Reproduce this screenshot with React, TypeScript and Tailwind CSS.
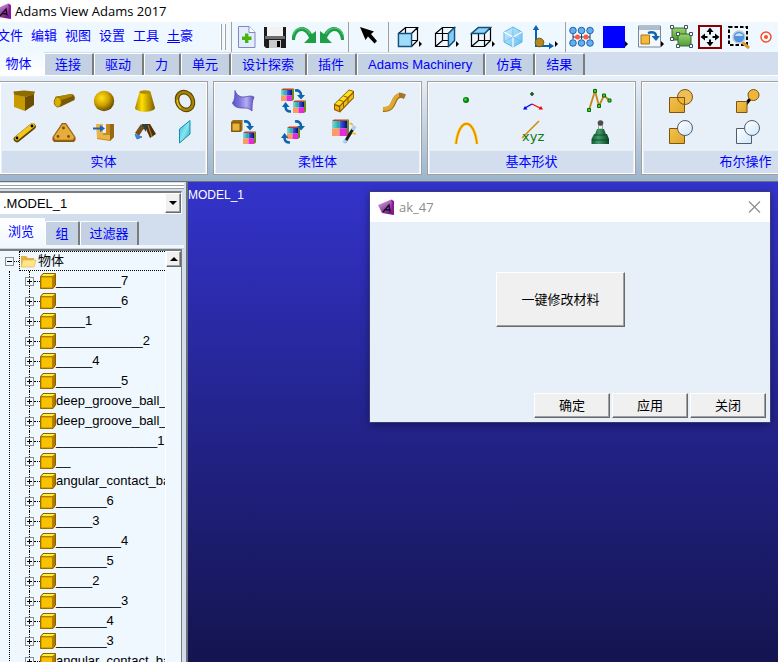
import React from "react";

type IconProps = { children: React.ReactNode; w?: number; h?: number };

function Svg({ children, w = 24, h = 24 }: IconProps) {
  return (
    <svg width={w} height={h} viewBox={`0 0 ${w} ${h}`} className="block shrink-0 overflow-visible" aria-hidden="true">
      {children}
    </svg>
  );
}

function Logo() {
  return (
    <Svg w={16} h={17}>
      <path d="M0 6 L13 0.5 L16 16 L4 14 Z" fill="url(#logoFace)" />
      <path d="M13 0.5 L16 2 V16 L14.5 15.5 Z" fill="#8a1a9c" />
      <path d="M5 13 L11 6 L12 12.5 M7 10.8 H12" stroke="#1c0822" strokeWidth="1.4" fill="none" />
    </Svg>
  );
}

function Defs() {
  return (
    <svg width="0" height="0" className="absolute" aria-hidden="true">
      <defs>
        <linearGradient id="logoFace" x1="0" y1="0" x2="0.6" y2="1">
          <stop offset="0" stopColor="#e3c4e8" />
          <stop offset="0.5" stopColor="#a55db3" />
          <stop offset="1" stopColor="#6a1a78" />
        </linearGradient>
        <radialGradient id="ball" cx="0.38" cy="0.35" r="0.7">
          <stop offset="0" stopColor="#ffe21a" />
          <stop offset="0.5" stopColor="#d1a400" />
          <stop offset="1" stopColor="#5c4500" />
        </radialGradient>
        <linearGradient id="coneFill">
          <stop offset="0" stopColor="#a88000" />
          <stop offset="0.35" stopColor="#ffe000" />
          <stop offset="1" stopColor="#7a5a00" />
        </linearGradient>
        <linearGradient id="purpleFill">
          <stop offset="0" stopColor="#5a50c8" />
          <stop offset="0.35" stopColor="#7f78dd" />
          <stop offset="0.65" stopColor="#b5aef5" />
          <stop offset="1" stopColor="#5c52bd" />
        </linearGradient>
        <linearGradient id="goldFill" x1="0" y1="0" x2="1" y2="1">
          <stop offset="0" stopColor="#f3c24d" />
          <stop offset="1" stopColor="#e0a528" />
        </linearGradient>
        <linearGradient id="paleFill" x1="0" y1="0" x2="1" y2="1">
          <stop offset="0" stopColor="#ffffff" />
          <stop offset="1" stopColor="#cfe6fb" />
        </linearGradient>
        <linearGradient id="cyanFill" x1="0" y1="0" x2="1" y2="1">
          <stop offset="0" stopColor="#25b7d8" />
          <stop offset="0.5" stopColor="#8be3ee" />
          <stop offset="1" stopColor="#1ba3c6" />
        </linearGradient>
        <linearGradient id="greenFill" x1="0" y1="0" x2="0" y2="1">
          <stop offset="0" stopColor="#9bd36c" />
          <stop offset="1" stopColor="#4e9a3a" />
        </linearGradient>
        <linearGradient id="bellFill">
          <stop offset="0" stopColor="#135c33" />
          <stop offset="0.4" stopColor="#3f9c68" />
          <stop offset="1" stopColor="#0b4424" />
        </linearGradient>
        <linearGradient id="skyFill" x1="0" y1="0" x2="1" y2="1">
          <stop offset="0" stopColor="#d3efff" />
          <stop offset="1" stopColor="#64bdf2" />
        </linearGradient>
        <linearGradient id="tealCell">
          <stop offset="0" stopColor="#7fdcd6" />
          <stop offset="1" stopColor="#14a3a6" />
        </linearGradient>
        <linearGradient id="blueCell">
          <stop offset="0" stopColor="#3a6ad8" />
          <stop offset="1" stopColor="#0a0a8c" />
        </linearGradient>
      </defs>
    </svg>
  );
}

/* ---------- toolbar icons ---------- */

const Drop = ({ x, y = 16 }: { x: number; y?: number }) => <path d={`M${x} ${y} l3 3 l-3 3 z`} fill="#000" />;

const NewDoc = () => (
  <Svg>
    <path d="M0.5 1.5 H11 L17 7.5 V22.5 H0.5 Z" fill="#e2eefb" stroke="#8484c4" />
    <path d="M11 1.5 V7.5 H17" fill="#fff" stroke="#8484c4" />
    <path d="M8.7 8.5 V18 M4 13.2 H13.5" stroke="#45b50c" strokeWidth="3.4" />
  </Svg>
);
const Save = () => (
  <Svg>
    <path d="M0 2 H3 V11 H19 V2 H22 V23 H2 L0 21 Z" fill="#1c1c1c" />
    <path d="M3 2 H19 V11 H3 Z" fill="#f2f2f2" />
    <path d="M1 11 H21 V14 H1 Z" fill="#6e6e6e" />
    <path d="M5 15 H17 V23 H5 Z" fill="#c9c9c9" />
    <path d="M13 16 H16 V22 H13 Z" fill="#000" />
  </Svg>
);
const Redo = () => (
  <Svg>
    <path d="M0 15 C-1 1 14 -3 20 9 L24 6 V18 H12 L17 13 C13 3 4 4 3 15 Z" fill="#1f9e48" />
    <path d="M1 10 C4 1 14 1 18 9" fill="none" stroke="#4fc46f" strokeWidth="1.2" />
  </Svg>
);
const Undo = () => (
  <Svg>
    <path d="M24 15 C25 1 10 -3 4 9 L0 6 V18 H12 L7 13 C11 3 20 4 21 15 Z" fill="#1f9e48" />
    <path d="M23 10 C20 1 10 1 6 9" fill="none" stroke="#4fc46f" strokeWidth="1.2" />
  </Svg>
);
const Pointer = () => (
  <Svg>
    <path d="M0 2 L14 6.5 L11 9 L17 16 L14.5 18.5 L8 11.5 L5.5 15 Z" fill="#000" />
  </Svg>
);
const WireBox = ({ face }: { face: "front" | "right" | "top" }) => (
  <Svg>
    <path
      d="M1.5 8.5 H14.5 V21.5 H1.5 Z M1.5 8.5 L8.5 2.5 H20.5 L14.5 8.5 M20.5 2.5 V15.5 L14.5 21.5 M8.5 2.5 V15.5 H20.5 M8.5 15.5 L1.5 21.5"
      fill="none"
      stroke="#000"
      strokeWidth="1.2"
    />
    {face === "front" && <path d="M1.5 8.5 H14.5 V21.5 H1.5 Z" fill="#9edcfb" stroke="#14507c" strokeWidth="1.3" />}
    {face === "right" && (
      <path d="M14.5 8.5 L20.5 2.5 V15.5 L14.5 21.5 Z" fill="#82cdf7" stroke="#14507c" strokeWidth="1.3" />
    )}
    {face === "top" && <path d="M1.5 8.5 L8.5 2.5 H20.5 L14.5 8.5 Z" fill="#8ed4fa" stroke="#14507c" strokeWidth="1.3" />}
    <Drop x={22} />
  </Svg>
);
const SkyCube = () => (
  <Svg>
    <path d="M10 2 L19 7 V17 L10 22 L1 17 V7 Z" fill="url(#skyFill)" stroke="#5ab6ec" />
    <path d="M1 7 L10 12 L19 7 M10 12 V22" stroke="#fff" strokeWidth="1.2" fill="none" />
    <path d="M10 2 V12 L1 17 M10 12 L19 17" stroke="#5ab6ec" strokeWidth="0.6" fill="none" />
  </Svg>
);
const Axes = () => (
  <Svg>
    <path d="M4 4 V21 H18" stroke="#0a63b0" strokeWidth="2" fill="none" />
    <path d="M4 0 L7.2 5 H0.8 Z M22 21 L17 17.8 V24.2 Z" fill="#0a63b0" />
    <circle cx="7.5" cy="17.5" r="4.3" fill="#b38a22" stroke="#76570c" />
    <Drop x={23} />
  </Svg>
);
const DotGrid = () => (
  <Svg>
    <path d="M4 9 V14 M12.5 9 V14 M21 9 V14 M4 12 H21" stroke="#123f70" strokeWidth="1" />
    {[5, 17.5].map((y) =>
      [4, 12.5, 21].map((x) => (
        <circle key={`${x}-${y}`} cx={x} cy={y + 0.5} r="3.3" fill="#62b0f4" stroke="#1c5896" strokeWidth="0.9" />
      )),
    )}
    <circle cx="8.5" cy="12" r="2.5" fill="#fb5a36" />
    <circle cx="17" cy="12" r="2.5" fill="#fb5a36" />
  </Svg>
);
const BlueSwatch = () => (
  <Svg>
    <path d="M0 1 H22 V23 H0 Z" fill="#00f" />
    <Drop x={22} />
  </Svg>
);
const WindowIcon = () => (
  <Svg>
    <path d="M0.5 1 H22.5 V22 H0.5 Z" fill="#f4f8fd" stroke="#7b8698" />
    <path d="M1 1.5 H22 V5 H1 Z" fill="#aebccc" />
    <path d="M3 10 H11.5 V19 H3 Z" fill="#f1b93e" stroke="#a9740e" />
    <path d="M10 8 C15 6 18 8 18 11" fill="none" stroke="#0d65ad" strokeWidth="2.4" />
    <path d="M13.5 11 H22 L18 16 Z" fill="#0d65ad" />
    <Drop x={23} />
  </Svg>
);
const GreenSquares = () => (
  <Svg>
    <path d="M2 3 H16 V15 H2 Z" fill="url(#greenFill)" stroke="#346f28" />
    <path d="M8 9 H21 V21 H8 Z" fill="url(#greenFill)" stroke="#346f28" />
    {[
      [0, 0], [14, 0], [0, 12], [6, 7], [19, 7], [6, 19], [19, 19],
    ].map(([x, y]) => (
      <path key={`${x}-${y}`} d={`M${x + 0.5} ${y + 0.5} h3 v3 h-3 z`} fill="#fff" stroke="#41505f" />
    ))}
  </Svg>
);
const FitIcon = () => (
  <Svg>
    <path d="M1 1 H23 V23 H1 Z" fill="#eef6fd" stroke="#8c0000" strokeWidth="2" />
    <path d="M12 2.5 L15.5 7 H8.5 Z M12 21.5 L15.5 17 H8.5 Z M2.5 12 L7 8.5 V15.5 Z M21.5 12 L17 8.5 V15.5 Z" fill="#000" />
    <path d="M12 6 V9.5 M12 14.5 V18 M6 12 H9.5 M14.5 12 H18" stroke="#000" strokeWidth="2" />
  </Svg>
);
const ZoomBox = () => (
  <Svg>
    <path d="M1 2 H19 V20 H1 Z" fill="none" stroke="#000" strokeWidth="2" strokeDasharray="3.5 2" />
    <path d="M14 17 L21 23" stroke="#d79b2e" strokeWidth="3" />
    <circle cx="11" cy="12" r="6" fill="#4f94e0" stroke="#bccad8" strokeWidth="1.6" />
    <path d="M7 11 C9 7 14 8 15 11 Z" fill="#c6e5fb" />
  </Svg>
);
const Target = () => (
  <Svg>
    <circle cx="6" cy="12" r="5" fill="#fff" stroke="#f4502e" strokeWidth="1.5" />
    <circle cx="6" cy="12" r="2" fill="#f4502e" />
  </Svg>
);

type Tool = { name: string; width: string; icon: React.ReactNode };
const toolGroups: { id: string; pad: string; tools: Tool[] }[] = [
  {
    id: "file",
    pad: "pl-[6px]",
    tools: [
      { name: "新建", width: "w-[26px]", icon: <NewDoc /> },
      { name: "保存", width: "w-[28px]", icon: <Save /> },
      { name: "重做", width: "w-[28px]", icon: <Redo /> },
      { name: "撤销", width: "w-[28px]", icon: <Undo /> },
    ],
  },
  { id: "select", pad: "pl-[11px]", tools: [{ name: "选择", width: "w-[28px]", icon: <Pointer /> }] },
  {
    id: "view",
    pad: "pl-[8px]",
    tools: [
      { name: "前视图", width: "w-[37px]", icon: <WireBox face="front" /> },
      { name: "右视图", width: "w-[36px]", icon: <WireBox face="right" /> },
      { name: "俯视图", width: "w-[33px]", icon: <WireBox face="top" /> },
      { name: "等轴测", width: "w-[29px]", icon: <SkyCube /> },
      { name: "坐标系", width: "w-[33px]", icon: <Axes /> },
    ],
  },
  {
    id: "display",
    pad: "pl-[3px]",
    tools: [
      { name: "工作格栅", width: "w-[34px]", icon: <DotGrid /> },
      { name: "背景颜色", width: "w-[35px]", icon: <BlueSwatch /> },
      { name: "窗口", width: "w-[32px]", icon: <WindowIcon /> },
      { name: "图标", width: "w-[28px]", icon: <GreenSquares /> },
      { name: "适合窗口", width: "w-[30px]", icon: <FitIcon /> },
      { name: "缩放", width: "w-[32px]", icon: <ZoomBox /> },
      { name: "中心", width: "w-[28px]", icon: <Target /> },
    ],
  },
];

/* ---------- ribbon icons ---------- */

const Mosaic = ({ x, y, s = 12 }: { x: number; y: number; s?: number }) => {
  const h = s / 2;
  return (
    <g transform={`translate(${x} ${y})`}>
      <path d={`M${s} 1 l2 -1.5 v${s} l-2 1.5 z`} fill="#6b8a1c" />
      <path d={`M0 1 l2 -1.5 h${s} l-2 1.5 z`} fill="#b8442c" />
      <path d={`M0 1 h${h} v${h} h-${h} z`} fill="url(#tealCell)" />
      <path d={`M${h} 1 h${h} v${h} h-${h} z`} fill="url(#blueCell)" />
      <path d={`M0 ${h + 1} h${h} v${h} h-${h} z`} fill="#ff9a62" />
      <path d={`M${h} ${h + 1} h${h} v${h} h-${h} z`} fill="#e62ad8" />
    </g>
  );
};
const ArrowDown = ({ x, y }: { x: number; y: number }) => (
  <g transform={`translate(${x} ${y})`}>
    <path d="M0 1.5 C4 1 6 3 6 6" fill="none" stroke="#0d65ad" strokeWidth="2.6" />
    <path d="M2 6 H10 L6 10.5 Z" fill="#0d65ad" />
  </g>
);
const ArrowUp = ({ x, y }: { x: number; y: number }) => (
  <g transform={`translate(${x} ${y})`}>
    <path d="M9 9.5 C5 9.5 3.5 8 3.5 4.5" fill="none" stroke="#0d65ad" strokeWidth="2.6" />
    <path d="M0 5 H7.5 L3.5 0 Z" fill="#0d65ad" />
  </g>
);

const solids = [
  {
    name: "立方体",
    icon: (
      <>
        <path d="M2 5 L13 8 V22 L2 18 Z" fill="#c79a00" />
        <path d="M13 8 L22 5 V16 L13 22 Z" fill="#6b4e00" />
        <path d="M1.5 2.5 L12 1.5 L23 2.5 L22 5.5 L13 8 L2 5.5 Z" fill="#8d6b00" />
      </>
    ),
  },
  {
    name: "圆柱体",
    icon: (
      <>
        <path d="M3 8 L19 5 C22 5 23.5 8 22.5 11 L8 18 Z" fill="#7a5a00" />
        <path d="M3 8 L19 5 L21 7 L7 12 Z" fill="#b08600" />
        <ellipse cx="5.8" cy="13" rx="3.6" ry="5" fill="#d9ac00" stroke="#7a5a00" strokeWidth="0.8" />
      </>
    ),
  },
  { name: "球体", icon: <circle cx="12" cy="12" r="10.2" fill="url(#ball)" /> },
  {
    name: "锥台",
    icon: (
      <>
        <path d="M6.5 3 L2 19 C3 24 21 24 22 19 L17.5 3 Z" fill="url(#coneFill)" />
        <ellipse cx="12" cy="3" rx="5.5" ry="1.8" fill="#b18a00" />
      </>
    ),
  },
  {
    name: "圆环",
    icon: (
      <g transform="rotate(-30 12 12)">
        <ellipse cx="12" cy="12" rx="7.6" ry="9.2" fill="none" stroke="#5e4700" strokeWidth="4.6" />
        <ellipse cx="12" cy="12" rx="7.6" ry="9.2" fill="none" stroke="#a88400" strokeWidth="2.4" />
        <path d="M5 16 A7.6 9.2 0 0 1 6 7" fill="none" stroke="#e7c430" strokeWidth="1.2" />
      </g>
    ),
  },
  {
    name: "连杆",
    icon: (
      <>
        <path d="M5 19 L20.5 6.5" stroke="#5e4500" strokeWidth="6.6" strokeLinecap="round" />
        <path d="M5 18 L20.5 5.5" stroke="#f3c61c" strokeWidth="4.6" strokeLinecap="round" />
        <circle cx="5" cy="18" r="1.4" fill="#000" />
        <circle cx="20" cy="6" r="1.4" fill="#000" />
      </>
    ),
  },
  {
    name: "平板",
    icon: (
      <>
        <path d="M10 3 H14 L23.5 17 V20 L22 22 H2 L0.5 20 V17 Z" fill="#8a5a0c" />
        <path d="M10.5 4 H13.5 L22.5 17 L21 20 H3 L1.5 17 Z" fill="#e5ad3c" stroke="#a8741a" strokeWidth="0.8" />
        <circle cx="11.5" cy="8" r="1.4" fill="#7d4c0c" />
        <circle cx="6" cy="16.5" r="1.4" fill="#7d4c0c" />
        <circle cx="16.5" cy="16.5" r="1.4" fill="#7d4c0c" />
      </>
    ),
  },
  {
    name: "拉伸体",
    icon: (
      <>
        <path d="M14 4 H22 V17 L18 21 L5 19 V13 H14 Z" fill="#c48a24" />
        <path d="M4 4 H11 V15 H18 V20 L5 18 Z" fill="#eab544" />
        <path d="M18 4 H22 V17 L18 21 Z" fill="#9a6814" />
        <path d="M1 8.5 H10" stroke="#1b62c4" strokeWidth="2" />
        <path d="M8 5 L13 8.5 L8 12 Z" fill="#1b62c4" />
      </>
    ),
  },
  {
    name: "旋转体",
    icon: (
      <>
        <path d="M9 4 H13 V12 L11 9 L9 10 Z" fill="#2a4150" />
        <path d="M8 4 L2 13 L6 16 L11 8 Z" fill="#75501a" />
        <path d="M13 4 H17 L23 14 L17 18 L13 9 Z" fill="#4c3008" />
        <path d="M15 5 L19 17" stroke="#a8792c" strokeWidth="1.2" />
        <path d="M2 14.5 L9 17 L4 19 Z" fill="#3b7fd8" stroke="#3b7fd8" />
      </>
    ),
  },
  { name: "平面", icon: <path d="M6.5 9 L17 0.5 V14 L6.5 23 Z" fill="url(#cyanFill)" stroke="#0d8fb3" /> },
];

const flex = [
  {
    name: "曲面",
    icon: (
      <path
        d="M4 1.5 C5 5 8 8 12 8 C16 8 19 6 23 8 C21 12 21 17 21 22 C18 19 15 19 12 19 C7 19 3 18 1.5 14 C4 11 4 6 4 1.5 Z"
        fill="url(#purpleFill)"
        stroke="#5048b0"
        strokeWidth="0.8"
      />
    ),
  },
  {
    name: "柔性体替换柔性体",
    icon: (
      <>
        <Mosaic x={0} y={0} s={11} />
        <Mosaic x={12} y={12} s={11} />
        <ArrowDown x={14} y={0} />
        <ArrowUp x={1} y={13} />
      </>
    ),
  },
  {
    name: "离散柔性连杆",
    icon: (
      <>
        <path d="M2 15 L17 0.5 L22 2 V9 L8 23.5 L2 21 Z" fill="#8a5c00" />
        <path d="M3 15 L17 1.5 L21 2.8 L7.5 16.5 Z" fill="#ffe11a" />
        <path d="M3 16.5 L7 18 V22 L3 20 Z" fill="#ffa915" />
        <path d="M8.2 17.5 L21.2 4.5 V8.5 L8.2 21.5 Z" fill="#f0bd10" />
        <path d="M7 11 L11.5 12.5 V18 M11.5 7 L16 8.5 V14" fill="none" stroke="#8a5c00" strokeWidth="1" />
      </>
    ),
  },
  {
    name: "柔性梁",
    icon: (
      <>
        <path d="M1 20.5 C15 21 9 7 19 6.5" fill="none" stroke="#9c6c12" strokeWidth="5" />
        <path d="M1 20 C15 20.5 8 6.5 19 6" fill="none" stroke="#e2a92e" strokeWidth="3.6" />
        <path d="M17 3.5 L20 4 L24 5.5 L22 10 L17 8 Z" fill="#a2772a" />
      </>
    ),
  },
  {
    name: "刚性体替换",
    icon: (
      <>
        <path d="M0 2 L2 0 H11.5 V10 L10 12 H0 Z" fill="#9a6d10" />
        <path d="M1 3 H9 V11 H1 Z" fill="#e7b43e" stroke="#6b4a06" strokeWidth="0.8" />
        <Mosaic x={12} y={12} s={11} />
        <ArrowDown x={13} y={0} />
      </>
    ),
  },
  {
    name: "刷新柔性体",
    icon: (
      <>
        <Mosaic x={6} y={7} s={11} />
        <ArrowDown x={14} y={0} />
        <ArrowUp x={0} y={13} />
      </>
    ),
  },
  {
    name: "创建柔性体",
    icon: (
      <>
        <Mosaic x={0} y={0} s={15} />
        <path d="M13 22 L21 9" stroke="#1a1a1a" strokeWidth="3" />
        <path d="M20.5 10 L23 6" stroke="#a9cdf5" strokeWidth="3.6" />
        <path d="M12 23 L14 20" stroke="#a9cdf5" strokeWidth="3.6" />
        <path d="M18 3 L21 5 M20 13 L24 14" stroke="#f5b80e" strokeWidth="1.8" />
      </>
    ),
  },
];

const shapes = [
  {
    name: "点",
    icon: (
      <>
        <circle cx="12" cy="11" r="3" fill="#0a7a0a" />
        <circle cx="11.5" cy="10.5" r="1.5" fill="#35d235" />
      </>
    ),
  },
  {
    name: "标记点",
    icon: (
      <>
        <path d="M11 3 V7 M9 5 H13" stroke="#0a5c14" strokeWidth="1.6" />
        <path d="M11 15 L4 19" stroke="#0000f0" strokeWidth="1.2" />
        <path d="M2 20.5 L6.5 20.5 L4 17 Z" fill="#0000f0" />
        <path d="M11 15 L19 19" stroke="#f00000" strokeWidth="1.2" />
        <path d="M22 20.5 L17.5 20.5 L20 17 Z" fill="#f00000" />
      </>
    ),
  },
  {
    name: "多段线",
    icon: (
      <>
        <path d="M1 21 L7 2 L11 17 L16 6.5 L21.5 11.5" fill="none" stroke="#c38712" strokeWidth="1.8" />
        {[[1, 21], [7, 2], [11, 17], [16, 6.5], [21.5, 11.5]].map(([x, y]) => (
          <path key={x} d={`M${x - 1.5} ${y - 1.5} h3 v3 h-3 z`} fill="#2fd62f" stroke="#0a6a0a" />
        ))}
      </>
    ),
  },
  {
    name: "圆弧",
    icon: (
      <>
        <path d="M2 24 C5 -3 20 -3 23 24" fill="none" stroke="#ffd21c" strokeWidth="3" />
        <path d="M2 24 C5 -3 20 -3 23 24" fill="none" stroke="#e48400" strokeWidth="1.3" />
      </>
    ),
  },
  {
    name: "函数曲线",
    icon: (
      <>
        <path d="M1 18 L18 1" stroke="#d58a0c" strokeWidth="1.6" />
        <text x="1" y="21" fontSize="13" fill="#0d7a12" className="font-['DejaVu_Sans',sans-serif]">
          xyz
        </text>
      </>
    ),
  },
  {
    name: "质点",
    icon: (
      <>
        <path d="M10.5 5 H14.5 V9 H10.5 Z" fill="#e8edf2" stroke="#777" strokeWidth="0.6" />
        <circle cx="12.5" cy="3" r="2.8" fill="#4d4d4d" />
        <path d="M9 9 H16 L19 17 H6 Z" fill="url(#bellFill)" />
        <path d="M6 14 H19 L21 19 V24 H3.5 V19 Z" fill="url(#bellFill)" />
        <path d="M6 15 H19 M4 20 H21" stroke="#0a3d20" strokeWidth="0.8" />
      </>
    ),
  },
];

const booleans = [
  {
    name: "合并",
    icon: (
      <>
        <path d="M1.5 8.5 H16.5 V23.5 H1.5 Z" fill="url(#goldFill)" stroke="#7d5510" />
        <circle cx="17" cy="8" r="7.5" fill="#eeb63a" fillOpacity="0.85" stroke="#7d5510" />
        <path d="M9.5 8.5 H16.5 V15.5" fill="none" stroke="#7d5510" />
      </>
    ),
  },
  {
    name: "融合",
    icon: (
      <>
        <path d="M11 15 L15 10" stroke="#000" strokeWidth="3" />
        <path d="M1.5 12.5 H12 V23.5 H1.5 Z" fill="url(#goldFill)" stroke="#7d5510" />
        <circle cx="18.5" cy="6" r="5.5" fill="#eeb63a" stroke="#7d5510" />
      </>
    ),
  },
  { name: "相交", icon: null },
  {
    name: "切割",
    icon: (
      <>
        <path d="M1.5 8.5 H16.5 V23.5 H1.5 Z" fill="url(#goldFill)" stroke="#7d5510" />
        <circle cx="17" cy="8" r="7.5" fill="url(#paleFill)" stroke="#515c6b" />
      </>
    ),
  },
  {
    name: "拆分",
    icon: (
      <>
        <path d="M1.5 8.5 H16.5 V23.5 H1.5 Z" fill="url(#paleFill)" stroke="#515c6b" />
        <circle cx="17" cy="8" r="7.5" fill="url(#paleFill)" stroke="#515c6b" />
      </>
    ),
  },
];

const panels = [
  { title: "实体", cols: "grid-cols-5", items: solids },
  { title: "柔性体", cols: "grid-cols-4", items: flex },
  { title: "基本形状", cols: "grid-cols-3", items: shapes },
  { title: "布尔操作", cols: "grid-cols-3", items: booleans },
];

/* ---------- model tree ---------- */

const parts = [
  "_________7",
  "_________6",
  "____1",
  "____________2",
  "_____4",
  "_________5",
  "deep_groove_ball_bearing",
  "deep_groove_ball_bearing",
  "______________1",
  "__",
  "angular_contact_ball",
  "_______6",
  "_____3",
  "_________4",
  "_______5",
  "_____2",
  "_________3",
  "_______4",
  "_______3",
  "angular_contact_ball",
];

function Expander({ open }: { open?: boolean }) {
  return (
    <button
      type="button"
      aria-label={open ? "折叠" : "展开"}
      className="relative flex size-[9px] shrink-0 items-center justify-center border border-[#8c8c8c] bg-[#f0f8ff]"
    >
      <span className="absolute h-px w-[5px] bg-black" />
      {!open && <span className="absolute h-[5px] w-px bg-black" />}
    </button>
  );
}

const PartIcon = () => (
  <Svg w={16} h={16}>
    <path d="M0.5 3.5 L3 0.5 H15.5 V12 L13 15.5 H0.5 Z" fill="#b07c00" stroke="#8a6200" />
    <path d="M1.5 3 L3.5 1 H15 L12.5 3 Z" fill="#fff03c" />
    <path d="M1 4 H12.5 V15 H1 Z" fill="#f8c200" stroke="#b07c00" strokeWidth="0.8" />
  </Svg>
);

const menus = ["文件", "编辑", "视图", "设置", "工具"];
const tabs = ["连接", "驱动", "力", "单元", "设计探索", "插件", "Adams Machinery", "仿真", "结果"];
const tabClass =
  "border-t border-r-2 border-l border-t-white border-r-[#7c7c7c] border-l-white bg-[#c3d1e3] whitespace-nowrap rounded-t-[2px]";
const raised =
  "border border-t-white border-l-white border-r-[#696969] border-b-[#696969] bg-[#f0f0f0] shadow-[inset_-1px_-1px_0_#a0a0a0]";

export default function App() {
  return (
    <div className="flex h-screen flex-col overflow-hidden bg-[#d2deee] font-['Liberation_Sans','Noto_Sans_CJK_SC',sans-serif] text-[13px] leading-5 text-black">
      <Defs />
      <header className="flex h-[22px] shrink-0 items-center gap-1 overflow-hidden bg-white">
        <span className="-ml-[5px]">
          <Logo />
        </span>
        <h1 className="font-['Open_Sans',sans-serif] text-[13px]">Adams View Adams 2017</h1>
      </header>

      <div className="flex h-[30px] shrink-0 overflow-hidden bg-[#f0f8ff] text-[#0000ff]">
        <nav className="-ml-[3px] flex w-[221px] shrink-0 gap-2 pt-1">
          {menus.map((m) => (
            <button key={m} type="button" className="h-5 whitespace-nowrap">
              {m}
            </button>
          ))}
          <button type="button" className="h-5 whitespace-nowrap">
            <span className="underline underline-offset-2">土</span>豪
          </button>
        </nav>
        <div className="flex w-[13px] shrink-0 gap-[2px] pt-[2px] pl-[2px]">
          <span className="h-[26px] w-[2px] border-r border-[#a0a0a0] bg-white" />
          <span className="h-[26px] w-[2px] border-r border-[#a0a0a0] bg-white" />
        </div>
        {toolGroups.map((g) => (
          <div key={g.id} className={`flex shrink-0 border-l border-[#a0a0a0] pt-[3px] ${g.pad}`}>
            {g.tools.map((t) => (
              <button key={t.name} type="button" aria-label={t.name} className={`h-6 shrink-0 ${t.width}`}>
                {t.icon}
              </button>
            ))}
          </div>
        ))}
      </div>

      <div role="tablist" className="flex h-6 shrink-0 items-end overflow-hidden border-b border-white text-[#0000ff]">
        <button
          type="button"
          role="tab"
          aria-selected="true"
          className="h-6 w-[44px] shrink-0 bg-linear-to-b from-[#f0f8ff] to-white pt-[2px] pr-[7px]"
        >
          物体
        </button>
        {tabs.map((t) => (
          <button
            key={t}
            type="button"
            role="tab"
            aria-selected="false"
            className={`h-[22px] shrink-0 pr-[11px] pl-[10px] ${tabClass}`}
          >
            {t}
          </button>
        ))}
      </div>

      <section className="-ml-px flex shrink-0 gap-[5px] overflow-hidden bg-linear-to-b from-[#e8f0f9] to-[#9cb4cc] pt-[5px] pb-[6px]">
        {panels.map((p) => (
          <div
            key={p.title}
            className="w-[209px] shrink-0 border border-[#a0a0a0] bg-[#e7eff9] shadow-[inset_0_0_0_1px_#fff]"
          >
            <div className={`mr-[2px] ml-1 grid justify-items-center gap-y-[7px] pt-[7px] ${p.cols}`}>
              {p.items.map((it) => (
                <button key={it.name} type="button" aria-label={it.name} className="size-6">
                  <Svg>{it.icon}</Svg>
                </button>
              ))}
            </div>
            <h2 className="mx-[2px] mt-[7px] mb-px h-[22px] bg-[#d2deee] text-center leading-[22px] text-[#0000ff]">
              {p.title}
            </h2>
          </div>
        ))}
      </section>

      <main className="flex min-h-0 grow border-t border-t-[#6e7178]">
        <aside className="flex w-[188px] shrink-0 flex-col border-r-2 border-[#6e7178] pr-[2px]">
          <div className="mt-px h-[3px] shrink-0 border-b border-[#a0a0a0] bg-white" />
          <div className="h-[3px] shrink-0 border-b border-[#a0a0a0] bg-white" />
          <div className="relative mt-[2px] mr-[2px] h-[23px] shrink-0 border-t-2 border-r border-b border-t-[#7c7c7c] border-r-white border-b-white bg-white">
            <select aria-label="模型" className="h-5 w-full appearance-none bg-transparent pt-px pl-[3px]">
              <option>.MODEL_1</option>
            </select>
            <span className={`pointer-events-none absolute top-0 right-0 flex h-5 w-4 items-center justify-center ${raised}`}>
              <Svg w={8} h={4}>
                <path d="M0 0 H8 L4 4 Z" fill="#000" />
              </Svg>
            </span>
          </div>
          <div role="tablist" className="mt-1 flex h-[27px] shrink-0 items-end text-[#0000ff]">
            <button type="button" role="tab" aria-selected="true" className="h-[27px] w-[45px] bg-linear-to-b from-white to-[#f0f8ff] pt-px pr-[3px]">
              浏览
            </button>
            <button type="button" role="tab" aria-selected="false" className={`h-6 w-[35px] ${tabClass}`}>
              组
            </button>
            <button type="button" role="tab" aria-selected="false" className={`h-6 w-[59px] ${tabClass}`}>
              过滤器
            </button>
          </div>
          <div className="h-[4px] shrink-0 border-b border-[#c8d2de] bg-[#f0f8ff]" />
          <div className="mr-[2px] flex min-h-0 grow border-t-2 border-r border-[#7c7c7c] bg-[#f0f8ff]">
            <div className="min-w-0 grow overflow-hidden">
              <div className="flex h-5 items-center pl-[5px]">
                <Expander open />
                <span className="w-[5px] border-t border-dotted border-black" />
                <span className="flex h-5 grow items-center gap-[2px] border-y border-l border-dotted border-black">
                  <Svg w={16} h={14}>
                    <path d="M1 2 H6 L8 4 H14 V13 H1 Z" fill="#e2b23c" />
                    <path d="M3 6 H16 L14 13 H1 Z" fill="#ffe489" stroke="#e0b045" strokeWidth="0.6" />
                  </Svg>
                  物体
                </span>
              </div>
              <ul className="ml-[9px] border-l border-dotted border-black">
                {parts.map((p, i) => (
                  <li key={i} className="ml-[19px] flex h-5 items-center border-l border-dotted border-black">
                    <span className="-ml-[5px]">
                      <Expander />
                    </span>
                    <span className="w-[6px] shrink-0 border-t border-dotted border-black" />
                    <PartIcon />
                    <span className="whitespace-nowrap">{p}</span>
                  </li>
                ))}
              </ul>
            </div>
            <div className="w-4 shrink-0 border-l border-white">
              <button type="button" aria-label="向上滚动" className={`flex h-4 w-[15px] items-center justify-center ${raised}`}>
                <Svg w={8} h={4}>
                  <path d="M0 4 H8 L4 0 Z" fill="#000" />
                </Svg>
              </button>
            </div>
          </div>
        </aside>

        <section className="relative min-w-0 grow bg-linear-to-b from-[#3333cc] to-[#141450]">
          <p className="pt-[3px] text-[12px] text-white">MODEL_1</p>
          <div
            role="dialog"
            aria-label="ak_47"
            className="absolute top-[10px] right-2 flex h-[230px] w-[400px] flex-col bg-[#e7eff9] shadow-[0_0_0_1px_#3a3a80,0_2px_8px_rgba(0,0,0,0.45)]"
          >
            <div className="flex h-[30px] shrink-0 items-center gap-[5px] bg-white px-2">
              <Logo />
              <span className="grow font-['Open_Sans',sans-serif] text-[#8c8c8c]">ak_47</span>
              <button type="button" aria-label="关闭窗口">
                <Svg w={14} h={12}>
                  <path d="M1 0.5 L12 11.5 M12 0.5 L1 11.5" stroke="#8a8a8a" strokeWidth="1.1" />
                </Svg>
              </button>
            </div>
            <div className="grow pt-[50px] pl-[126px]">
              <button type="button" className={`h-[55px] w-[129px] ${raised}`}>
                一键修改材料
              </button>
            </div>
            <div className="flex justify-end gap-[2px] px-1 pb-1">
              {["确定", "应用", "关闭"].map((b) => (
                <button key={b} type="button" className={`h-[25px] w-[76px] ${raised}`}>
                  {b}
                </button>
              ))}
            </div>
          </div>
        </section>
      </main>
    </div>
  );
}
